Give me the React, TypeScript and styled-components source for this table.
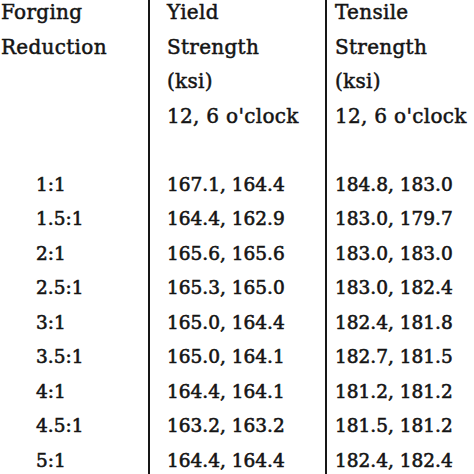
import styled, { createGlobalStyle } from "styled-components";

const GlobalStyle = createGlobalStyle`
  html, body {
    margin: 0;
    padding: 0;
    background: #fff;
    overflow: hidden;
  }
`;

const header = [
  ["Forging", "Yield", "Tensile"],
  ["Reduction", "Strength", "Strength"],
  ["", "(ksi)", "(ksi)"],
  ["", "12, 6 o'clock", "12, 6 o'clock"],
];

const rows = [
  ["1:1", "167.1, 164.4", "184.8, 183.0"],
  ["1.5:1", "164.4, 162.9", "183.0, 179.7"],
  ["2:1", "165.6, 165.6", "183.0, 183.0"],
  ["2.5:1", "165.3, 165.0", "183.0, 182.4"],
  ["3:1", "165.0, 164.4", "182.4, 181.8"],
  ["3.5:1", "165.0, 164.1", "182.7, 181.5"],
  ["4:1", "164.4, 164.1", "181.2, 181.2"],
  ["4.5:1", "163.2, 163.2", "181.5, 181.2"],
  ["5:1", "164.4, 164.4", "182.4, 182.4"],
];

export default function App() {
  return (
    <>
      <GlobalStyle />
      <Table>
        <Column>
          <Inner>
            {header.map((h, i) => (
              <HeadCell key={i}>{h[0] || "\u00a0"}</HeadCell>
            ))}
            <HeadCell>&nbsp;</HeadCell>
            {rows.map((r, i) => (
              <DataCell key={i} $indent={35}>{r[0]}</DataCell>
            ))}
          </Inner>
        </Column>
        <Column $rule $pad={17}>
          <Inner>
            {header.map((h, i) => (
              <HeadCell key={i}>{h[1]}</HeadCell>
            ))}
            <HeadCell>&nbsp;</HeadCell>
            {rows.map((r, i) => (
              <DataCell key={i}>{r[1]}</DataCell>
            ))}
          </Inner>
        </Column>
        <Column $rule $pad={8}>
          <Inner>
            {header.map((h, i) => (
              <HeadCell key={i}>{h[2]}</HeadCell>
            ))}
            <HeadCell>&nbsp;</HeadCell>
            {rows.map((r, i) => (
              <DataCell key={i}>{r[2]}</DataCell>
            ))}
          </Inner>
        </Column>
      </Table>
    </>
  );
}

const Table = styled.div`
  display: grid;
  grid-template-columns: 148px 177px 1fr;
  width: 474px;
  height: 474px;
  overflow: hidden;
  font-family: "DejaVu Serif", "Liberation Serif", serif;
  color: #141414;
`;

const Column = styled.div<{ $rule?: boolean; $pad?: number }>`
  border-left: ${(p) => (p.$rule ? "2px solid #161616" : "none")};
  padding-left: ${(p) => p.$pad ?? 1}px;
  overflow: hidden;
`;

const Inner = styled.div`
  margin-top: -5px;
`;

const HeadCell = styled.div`
  height: 34.5px;
  line-height: 34.5px;
  white-space: nowrap;
  font-size: 20px;
  letter-spacing: 0.3px;
  -webkit-text-stroke: 0.5px #141414;
`;

const DataCell = styled.div<{ $indent?: number }>`
  height: 34.5px;
  line-height: 34.5px;
  white-space: nowrap;
  font-size: 18.5px;
  padding-left: ${(p) => p.$indent ?? 0}px;
  -webkit-text-stroke: 0.6px #141414;
`;
